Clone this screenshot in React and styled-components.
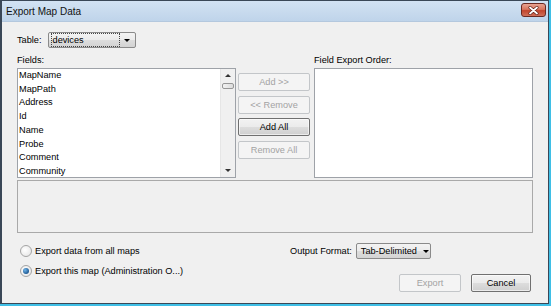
import React from "react";
import styled, { createGlobalStyle } from "styled-components";

const GlobalStyle = createGlobalStyle`
  html, body {
    margin: 0;
    padding: 0;
    background: #3fbfe6;
  }
  body {
    font-family: "Liberation Sans", Arial, sans-serif;
    font-size: 9.2px;
    color: #000;
  }
`;

const Window = styled.div`
  width: 549px;
  height: 304px;
  box-sizing: border-box;
  border: 1px solid #3a4757;
  border-left-width: 2px;
  background: #f0f0f0;
  display: flex;
  flex-direction: column;
  overflow: hidden;
`;

const TitleBar = styled.div`
  height: 20px;
  flex: none;
  display: flex;
  align-items: center;
  justify-content: space-between;
  padding: 0 2px 0 4px;
  background: linear-gradient(#d2e2f3, #bfd4ea);
  border-bottom: 1px solid #b4c8de;
`;

const TitleText = styled.span`
  font-size: 10px;
  color: #111;
`;

const CloseButton = styled.div`
  width: 25px;
  height: 14px;
  box-sizing: border-box;
  border: 1px solid #6b2a22;
  border-radius: 3px;
  background: linear-gradient(#e8a493 0%, #d9765f 45%, #c2452d 55%, #d0705a 100%);
  display: flex;
  align-items: center;
  justify-content: center;
  margin-top: -2px;
`;

const Content = styled.div`
  flex: 1;
  padding: 0 15px 0 15px;
  display: flex;
  flex-direction: column;
`;

const TableRow = styled.div`
  display: flex;
  align-items: center;
  gap: 6px;
  margin-top: 10px;
  height: 16px;
`;

const Combo = styled.div`
  width: ${p => p.width}px;
  height: 16px;
  box-sizing: border-box;
  border: 1px solid #8a8a8a;
  border-radius: 2px;
  background: linear-gradient(#f3f3f3 0%, #ebebeb 50%, #dddddd 51%, #d3d3d3 100%);
  display: flex;
  align-items: center;
  padding: 0 5px 0 2px;
  gap: 4px;
`;

const ComboText = styled.span`
  flex: 1;
  line-height: 12px;
  padding: 0 1px;
  border: 1px ${p => (p.focused ? "dotted #444" : "solid transparent")};
  white-space: nowrap;
`;

const Arrow = styled.span`
  width: 0;
  height: 0;
  border-left: 3px solid transparent;
  border-right: 3px solid transparent;
  border-top: 3px solid #000;
`;

const Columns = styled.div`
  display: grid;
  grid-template-columns: 219px 74px 1fr;
  margin-top: ${p => p.top || 0}px;
  height: ${p => p.height}px;
  & > :nth-child(2) {
    margin-left: 2px;
  }
  & > :nth-child(3) {
    margin-left: 4px;
  }
`;

const Label = styled.div`
  line-height: 12px;
  white-space: nowrap;
`;

const ListBox = styled.div`
  box-sizing: border-box;
  border: 1px solid #9ea2a8;
  background: #fff;
  display: flex;
  overflow: hidden;
`;

const Items = styled.div`
  flex: 1;
  padding-left: 1px;
`;

const Item = styled.div`
  line-height: 13.7px;
  white-space: nowrap;
`;

const ScrollBar = styled.div`
  width: 14px;
  background: #f0f0f0;
  border-left: 1px solid #e6e6e6;
  display: flex;
  flex-direction: column;
  align-items: center;
`;

const ScrollArrow = styled.div`
  height: 13px;
  width: 100%;
  display: flex;
  align-items: center;
  justify-content: center;
  &::after {
    content: "";
    border-left: 3px solid transparent;
    border-right: 3px solid transparent;
    ${p => (p.up ? "border-bottom: 3px solid #333;" : "border-top: 3px solid #333;")}
  }
`;

const Thumb = styled.div`
  width: 12px;
  height: 6px;
  box-sizing: border-box;
  border: 1px solid #979797;
  border-radius: 2px;
  background: linear-gradient(90deg, #f2f2f2, #dcdcdc);
  margin-top: 1px;
`;

const Track = styled.div`
  flex: 1;
`;

const ButtonColumn = styled.div`
  display: flex;
  flex-direction: column;
  gap: 4.5px;
  padding-top: 5px;
`;

const Button = styled.div`
  height: ${p => p.h || 18}px;
  width: ${p => (p.w ? `${p.w}px` : "auto")};
  box-sizing: border-box;
  border-radius: 2px;
  display: flex;
  align-items: center;
  justify-content: center;
  white-space: nowrap;
  border: 1px solid ${p => (p.disabled ? "#c3c6c9" : "#707070")};
  color: ${p => (p.disabled ? "#a3a3a3" : "#000")};
  background: ${p =>
    p.disabled
      ? "#f4f4f4"
      : "linear-gradient(#f2f2f2 0%, #ebebeb 50%, #dddddd 51%, #cfcfcf 100%)"};
  box-shadow: ${p => (p.disabled ? "none" : "inset 0 0 0 1px rgba(255,255,255,0.6)")};
`;

const DescBox = styled.div`
  margin-top: 2px;
  height: 53px;
  box-sizing: border-box;
  border: 1px solid #a9a9a9;
  background: #f0f0f0;
`;

const Bottom = styled.div`
  display: flex;
  justify-content: space-between;
`;

const RadioGroup = styled.div`
  display: flex;
  flex-direction: column;
  gap: 6px;
  padding: 11px 0 0 3px;
`;

const RadioRow = styled.label`
  display: flex;
  align-items: center;
  gap: 3px;
  height: 14px;
`;

const RadioCircle = styled.span`
  width: 12px;
  height: 12px;
  box-sizing: border-box;
  border-radius: 50%;
  border: 1px solid #a4a4a4;
  background: radial-gradient(circle at 40% 40%, #ffffff, #e2e2e2);
  display: flex;
  align-items: center;
  justify-content: center;
  &::after {
    content: "";
    display: ${p => (p.checked ? "block" : "none")};
    width: 6px;
    height: 6px;
    border-radius: 50%;
    background: radial-gradient(circle at 35% 35%, #6fb4e8, #1f5a94 70%);
  }
`;

const RightColumn = styled.div`
  width: 243px;
  display: flex;
  flex-direction: column;
  padding-top: 10px;
`;

const FormatRow = styled.div`
  display: flex;
  align-items: center;
  gap: 4px;
  height: 16px;
`;

const ButtonRow = styled.div`
  display: flex;
  justify-content: flex-end;
  gap: 10px;
  margin-top: 15px;
  padding-right: 2px;
`;

const fields = ["MapName", "MapPath", "Address", "Id", "Name", "Probe", "Comment", "Community"];

export default function App() {
  return (
    <>
      <GlobalStyle />
      <Window>
        <TitleBar>
          <TitleText>Export Map Data</TitleText>
          <CloseButton>
            <svg width="11" height="9" viewBox="0 0 11 9">
              <path d="M2 1.5 L9 7.5 M9 1.5 L2 7.5" stroke="#5a1a12" strokeWidth="3" strokeLinecap="round" />
              <path d="M2 1.5 L9 7.5 M9 1.5 L2 7.5" stroke="#fff" strokeWidth="1.8" strokeLinecap="round" />
            </svg>
          </CloseButton>
        </TitleBar>
        <Content>
          <TableRow>
            <Label>Table:</Label>
            <Combo width={88}>
              <ComboText focused>devices</ComboText>
              <Arrow />
            </Combo>
          </TableRow>
          <Columns top={6} height={12}>
            <Label>Fields:</Label>
            <div />
            <Label>Field Export Order:</Label>
          </Columns>
          <Columns top={2} height={110}>
            <ListBox>
              <Items>
                {fields.map(f => (
                  <Item key={f}>{f}</Item>
                ))}
              </Items>
              <ScrollBar>
                <ScrollArrow up />
                <Thumb />
                <Track />
                <ScrollArrow />
              </ScrollBar>
            </ListBox>
            <ButtonColumn>
              <Button disabled>Add &gt;&gt;</Button>
              <Button disabled>&lt;&lt; Remove</Button>
              <Button>Add All</Button>
              <Button disabled>Remove All</Button>
            </ButtonColumn>
            <ListBox />
          </Columns>
          <DescBox />
          <Bottom>
            <RadioGroup>
              <RadioRow>
                <RadioCircle />
                Export data from all maps
              </RadioRow>
              <RadioRow>
                <RadioCircle checked />
                Export this map (Administration O...)
              </RadioRow>
            </RadioGroup>
            <RightColumn>
              <FormatRow>
                <Label>Output Format:</Label>
                <Combo width={75}>
                  <ComboText>Tab-Delimited</ComboText>
                  <Arrow />
                </Combo>
              </FormatRow>
              <ButtonRow>
                <Button disabled w={62}>Export</Button>
                <Button w={60}>Cancel</Button>
              </ButtonRow>
            </RightColumn>
          </Bottom>
        </Content>
      </Window>
    </>
  );
}
